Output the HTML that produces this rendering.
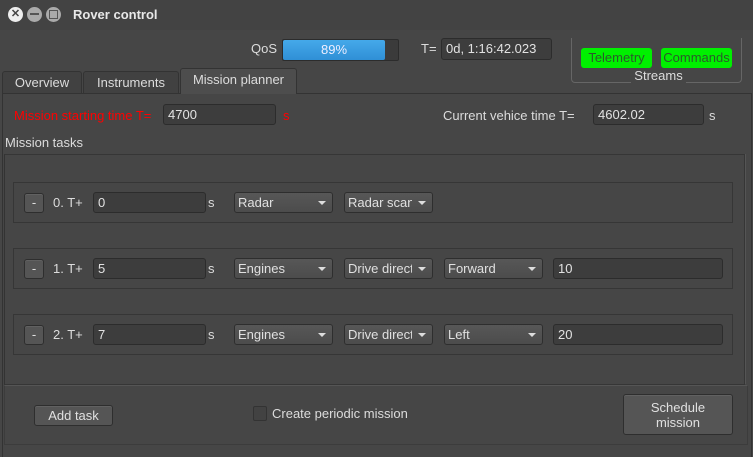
<!DOCTYPE html>
<html><head><style>
*{box-sizing:border-box;margin:0;padding:0}
body{width:753px;height:457px;background:#464646;font-family:"Liberation Sans",sans-serif;font-size:13px;color:#dcdcdc;position:relative;overflow:hidden}
.a{position:absolute}
.f{position:absolute;background:#3d3d3d;border:1px solid #2c2c2c;border-radius:3px;padding:2px 0 0 4px;color:#e2e2e2;height:21px}
.b{position:absolute;background:#555;border:1px solid #2e2e2e;border-radius:3px;text-align:center;color:#e0e0e0;box-shadow:inset 0 1px 0 #616161}
.c{position:absolute;background:linear-gradient(#575757,#4c4c4c);border:1px solid #2e2e2e;border-radius:3px;padding:2px 0 0 3px;height:21px;color:#e0e0e0;overflow:hidden;white-space:nowrap}
.c:after{content:"";position:absolute;right:6px;top:8px;border-left:4px solid transparent;border-right:4px solid transparent;border-top:4px solid #ddd}
.c span{display:block;overflow:hidden;margin-right:20px}
.row{position:absolute;left:13px;width:720px;height:41px;border:1px solid #363636}
.tab{position:absolute;top:71px;height:22px;border:1px solid #333;border-bottom:none;border-radius:3px 3px 0 0;background:#414141;text-align:center;padding-top:3px}
.circ{position:absolute;top:7px;width:15px;height:15px;border-radius:50%;background:#aaa}
</style></head><body>
<div class="a" style="left:0;top:0;width:753px;height:30px;background:#434343"></div>
<div class="circ" style="left:8px;background:#eee;color:#444;font-size:11px;line-height:15px;text-align:center;font-weight:bold">✕</div>
<div class="circ" style="left:27px"><div class="a" style="left:3px;top:6px;width:9px;height:2px;background:#555"></div></div>
<div class="circ" style="left:46px"><div class="a" style="left:3px;top:3px;width:9px;height:9px;border:1.5px solid #555"></div></div>
<div class="a" style="left:73px;top:7px;font-weight:bold;color:#e8e8e8">Rover control</div>

<div class="a" style="left:251px;top:41px">QoS</div>
<div class="a" style="left:282px;top:39px;width:117px;height:22px;background:#3b3b3b;border:1px solid #2c2c2c;border-radius:2px"></div>
<div class="a" style="left:283px;top:40px;width:102px;height:20px;background:linear-gradient(#45a9ea,#2f8fd6);color:#eef;text-align:center;padding-top:2px;border-radius:2px">89%</div>
<div class="a" style="left:421px;top:41px">T=</div>
<div class="f" style="left:441px;top:38px;width:111px;height:22px">0d, 1:16:42.023</div>
<div class="a" style="left:571px;top:38px;width:171px;height:45px;border:1px solid #666;border-top:none;border-radius:0 0 4px 4px"></div>
<div class="a" style="left:631px;top:68px;width:55px;height:16px;background:#464646;text-align:center">Streams</div>
<div class="a" style="left:581px;top:48px;width:71px;height:20px;background:#00f000;border-radius:3px;color:#2b5a2b;text-align:center;padding-top:2px">Telemetry</div>
<div class="a" style="left:661px;top:48px;width:71px;height:20px;background:#00f000;border-radius:3px;color:#2b5a2b;text-align:center;padding-top:2px">Commands</div>

<div class="a" style="left:2px;top:93px;width:750px;height:364px;border:1px solid #333;border-bottom:none"></div>
<div class="tab" style="left:2px;width:80px">Overview</div>
<div class="tab" style="left:83px;width:96px">Instruments</div>
<div class="tab" style="left:180px;top:68px;height:26px;width:117px;background:#4d4d4d;border-bottom:none">Mission planner</div>

<div class="a" style="left:14px;top:108px;color:#ff0000">Mission starting time T=</div>
<div class="f" style="left:163px;top:104px;width:113px">4700</div>
<div class="a" style="left:283px;top:108px;color:#ff0000">s</div>
<div class="a" style="left:443px;top:108px">Current vehice time T=</div>
<div class="f" style="left:593px;top:104px;width:111px">4602.02</div>
<div class="a" style="left:709px;top:108px">s</div>
<div class="a" style="left:5px;top:135px">Mission tasks</div>

<div class="a" style="left:4px;top:154px;width:741px;height:231px;border:1px solid #363636;border-left-color:#333"></div>
<div class="a" style="left:745px;top:154px;width:1px;height:230px;background:#555"></div>

<div class="row" style="top:182px"></div>
<div class="row" style="top:248px"></div>
<div class="row" style="top:314px"></div>

<div class="b" style="left:24px;top:193px;width:20px;height:20px;line-height:18px">-</div>
<div class="a" style="left:53px;top:195px">0. T+</div>
<div class="f" style="left:93px;top:192px;width:113px">0</div>
<div class="a" style="left:208px;top:195px">s</div>
<div class="c" style="left:234px;top:192px;width:99px"><span>Radar</span></div>
<div class="c" style="left:344px;top:192px;width:89px"><span>Radar scan</span></div>

<div class="b" style="left:24px;top:259px;width:20px;height:20px;line-height:18px">-</div>
<div class="a" style="left:53px;top:261px">1. T+</div>
<div class="f" style="left:93px;top:258px;width:113px">5</div>
<div class="a" style="left:208px;top:261px">s</div>
<div class="c" style="left:234px;top:258px;width:99px"><span>Engines</span></div>
<div class="c" style="left:344px;top:258px;width:89px"><span>Drive direction</span></div>
<div class="c" style="left:444px;top:258px;width:99px"><span>Forward</span></div>
<div class="f" style="left:553px;top:258px;width:170px">10</div>

<div class="b" style="left:24px;top:325px;width:20px;height:20px;line-height:18px">-</div>
<div class="a" style="left:53px;top:327px">2. T+</div>
<div class="f" style="left:93px;top:324px;width:113px">7</div>
<div class="a" style="left:208px;top:327px">s</div>
<div class="c" style="left:234px;top:324px;width:99px"><span>Engines</span></div>
<div class="c" style="left:344px;top:324px;width:89px"><span>Drive direction</span></div>
<div class="c" style="left:444px;top:324px;width:99px"><span>Left</span></div>
<div class="f" style="left:553px;top:324px;width:170px">20</div>

<div class="a" style="left:4px;top:385px;width:744px;height:60px;border:1px solid #3c3c3c;border-top:1px solid #555"></div>
<div class="b" style="left:34px;top:405px;width:79px;height:21px;line-height:19px">Add task</div>
<div class="a" style="left:253px;top:406px;width:14px;height:15px;border:1px solid #333;border-radius:2px;background:#424242"></div>
<div class="a" style="left:272px;top:406px">Create periodic mission</div>
<div class="b" style="left:623px;top:394px;width:110px;height:41px;padding-top:5px;line-height:15px">Schedule<br>mission</div>
</body></html>
